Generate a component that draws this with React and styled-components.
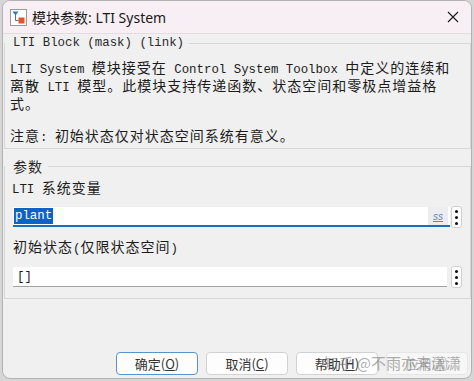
import React from 'react';
import styled, { createGlobalStyle } from 'styled-components';

const GlobalStyle = createGlobalStyle`
  html, body {
    margin: 0;
    padding: 0;
    background: #d6d6d6;
  }
  body {
    width: 474px;
    height: 381px;
    overflow: hidden;
  }
`;

const Window = styled.div`
  box-sizing: border-box;
  position: relative;
  width: 470px;
  height: 379px;
  margin-left: 2px;
  border: 1px solid #b2b2b2;
  border-radius: 8px;
  overflow: hidden;
  background: #f0f0f0;
  display: flex;
  flex-direction: column;
  font-family: "Liberation Mono", "Noto Sans CJK SC", monospace;
  font-size: 12.4px;
  color: #1c1c1c;
`;

const TitleBar = styled.div`
  height: 32px;
  flex-shrink: 0;
  display: flex;
  align-items: center;
  padding: 0 12px 0 7px;
  background: #f7eff4;
  border-bottom: 1px solid #e2dde0;
`;

const Title = styled.span`
  margin-left: 5px;
  font-family: "Noto Sans", "Noto Sans CJK SC", sans-serif;
  font-size: 14px;
  color: #1a1a1a;
  flex: 1;
`;

const Group = styled.fieldset`
  margin: ${(p) => (p.$gap ? `${p.$gap}px` : '0')} 0 0 1px;
  padding: ${(p) => p.$pad};
  min-width: 0;
  border: 1px solid #d7d7d7;
`;

const Legend = styled.legend`
  height: 18px;
  margin-left: -5px;
  padding: 0 5px 0 8px;
  line-height: 18px;
  color: #2a2a2a;
`;

const Line = styled.div`
  height: 18px;
  white-space: pre;
  line-height: 18px;
  margin-top: ${(p) => p.$top || 0}px;
  padding-left: ${(p) => p.$indent || 0}px;
`;

const Han = styled.span`
  font-family: "Noto Sans CJK SC", sans-serif;
  font-size: 14px;
  letter-spacing: 1px;
`;

const InputRow = styled.div`
  display: flex;
  align-items: center;
  gap: ${(p) => p.$gap}px;
  margin: ${(p) => p.$top}px 0 0 3px;
`;

const Field = styled.div`
  box-sizing: border-box;
  flex: 1;
  height: 20px;
  display: flex;
  align-items: center;
  padding-left: 1px;
  background: #fff;
  border-bottom: ${(p) => (p.$focus ? '2px solid #1f6cb6' : '1px solid #a3a3a3')};
`;

const Selected = styled.span`
  background: #0b63c9;
  color: #fff;
  line-height: 16px;
  padding: 0 1px;
`;

const Plain = styled.span`
  padding-left: 3px;
`;

const SsTag = styled.span`
  margin-left: auto;
  margin-right: 2px;
  width: 20px;
  height: 18px;
  display: flex;
  align-items: center;
  justify-content: center;
  background: #ededed;
  font-family: "Liberation Sans", sans-serif;
  font-size: 10px;
  font-style: italic;
  text-decoration: underline;
  color: #5b86bf;
`;

const DotsButton = styled.div`
  box-sizing: border-box;
  width: 11px;
  height: 22px;
  display: flex;
  flex-direction: column;
  align-items: center;
  justify-content: center;
  gap: 3px;
  background: #fff;
  border: 1px solid #cfcfcf;
  border-radius: 3px;
`;

const Dot = styled.span`
  width: 3px;
  height: 3px;
  border-radius: 50%;
  background: #111;
`;

const ButtonRow = styled.div`
  margin-top: auto;
  display: flex;
  justify-content: flex-end;
  gap: 8px;
  padding: 0 3px 3px 0;
`;

const Button = styled.div`
  box-sizing: border-box;
  width: 82px;
  height: 23px;
  display: flex;
  align-items: center;
  justify-content: center;
  background: ${(p) => (p.$disabled ? '#f7f7f7' : '#fdfdfd')};
  border: 1px solid ${(p) => (p.$primary ? '#5b93c7' : p.$disabled ? '#e6e6e6' : '#d2d2d2')};
  border-radius: 4px;
  font-family: "Noto Sans CJK SC", sans-serif;
  font-size: 13px;
  color: ${(p) => (p.$disabled ? '#b5b5b5' : '#333')};
`;

const Watermark = styled.div`
  position: absolute;
  right: 10px;
  bottom: 5px;
  font-family: "Noto Sans CJK SC", sans-serif;
  font-size: 15px;
  color: rgba(105, 105, 105, 0.55);
  pointer-events: none;
`;

const CJK = /([\u3000-\u303f\u4e00-\u9fff\uff00-\uffef]+)/;

function mix(text) {
  return text
    .split(CJK)
    .filter(Boolean)
    .map((part, i) => (CJK.test(part) ? <Han key={i}>{part}</Han> : part));
}

function BlockIcon() {
  return (
    <svg width="17" height="17" viewBox="0 0 17 17">
      <rect x="0.5" y="0.5" width="16" height="16" fill="#fff" stroke="#9a9a9a" />
      <path d="M2.5 2.5h6l-3 4z" fill="#2f78c4" />
      <path d="M5.5 6v5.5h3" fill="none" stroke="#6b6b6b" strokeWidth="1" />
      <rect x="8.5" y="8.5" width="6" height="6" fill="#e0552a" />
    </svg>
  );
}

function CloseIcon() {
  return (
    <svg width="12" height="12" viewBox="0 0 12 12">
      <path d="M1 1l10 10M11 1L1 11" stroke="#1a1a1a" strokeWidth="1.1" />
    </svg>
  );
}

function Dots() {
  return (
    <DotsButton>
      <Dot />
      <Dot />
      <Dot />
    </DotsButton>
  );
}

export default function App() {
  return (
    <>
      <GlobalStyle />
      <Window>
        <TitleBar>
          <BlockIcon />
          <Title>模块参数: LTI System</Title>
          <CloseIcon />
        </TitleBar>

        <Group $pad="6px 0 4px 5px">
          <Legend>LTI Block (mask) (link)</Legend>
          <Line>{mix('LTI System 模块接受在 Control System Toolbox 中定义的连续和')}</Line>
          <Line>{mix('离散 LTI 模型。此模块支持传递函数、状态空间和零极点增益格')}</Line>
          <Line>{mix('式。')}</Line>
          <Line $top={14}>{mix('注意: 初始状态仅对状态空间系统有意义。')}</Line>
        </Group>

        <Group $gap={8} $pad="3px 8px 10px 5px">
          <Legend>{mix('参数')}</Legend>
          <Line $indent={2}>{mix('LTI 系统变量')}</Line>
          <InputRow $top={10} $gap={1}>
            <Field $focus>
              <Selected>plant</Selected>
              <SsTag>ss</SsTag>
            </Field>
            <Dots />
          </InputRow>
          <Line $top={9} $indent={3}>{mix('初始状态(仅限状态空间)')}</Line>
          <InputRow $top={11} $gap={4}>
            <Field>
              <Plain>[]</Plain>
            </Field>
            <Dots />
          </InputRow>
        </Group>

        <ButtonRow>
          <Button $primary>确定(<u>O</u>)</Button>
          <Button>取消(<u>C</u>)</Button>
          <Button>帮助(<u>H</u>)</Button>
          <Button $disabled>应用(<u>A</u>)</Button>
        </ButtonRow>

        <Watermark>知乎 @不雨亦来潇潇</Watermark>
      </Window>
    </>
  );
}
